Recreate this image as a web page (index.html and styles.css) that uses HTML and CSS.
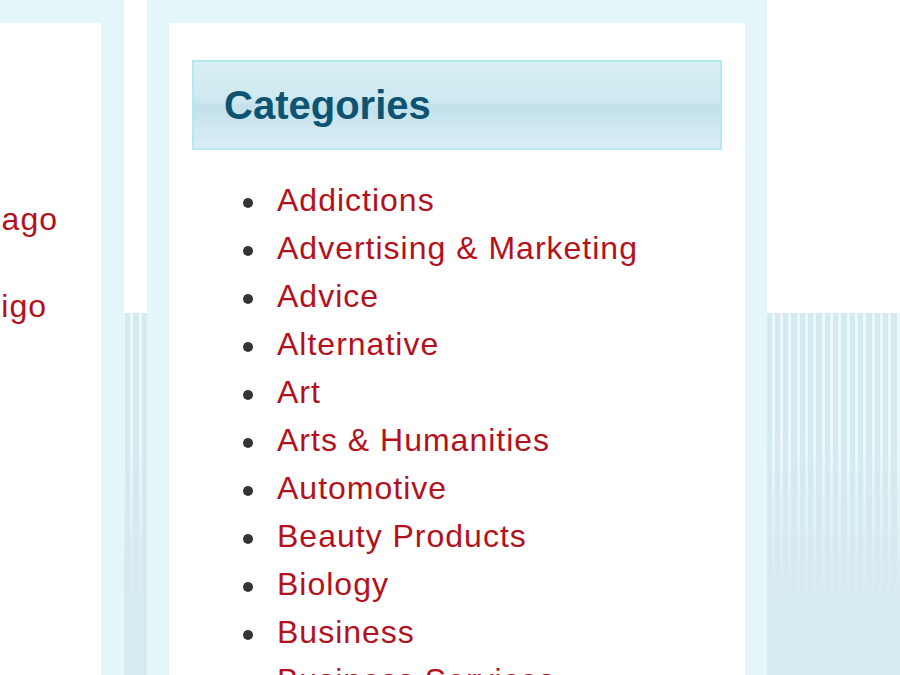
FILE: index.html
```html
<!DOCTYPE html>
<html lang="en">
<head>
    <meta charset="UTF-8">
    <meta name="viewport" content="width=device-width, initial-scale=1.0">
    <title>Directory - Categories</title>
    <link rel="stylesheet" href="styles.css">
</head>
<body>
    <div class="page">
        <!-- Left column (mostly off screen) -->
        <div class="panel panel-left">
            <div class="panel-inner">
                <p class="city"><a href="#">Santiago</a></p>
                <p class="city city-second"><a href="#">Rodrigo</a></p>
            </div>
        </div>

        <!-- Categories column -->
        <div class="panel panel-main">
            <div class="panel-inner">
                <div class="box-title">
                    <h2>Categories</h2>
                </div>
                <ul class="cat-list">
                    <li><a href="#">Addictions</a></li>
                    <li><a href="#">Advertising &amp; Marketing</a></li>
                    <li><a href="#">Advice</a></li>
                    <li><a href="#">Alternative</a></li>
                    <li><a href="#">Art</a></li>
                    <li><a href="#">Arts &amp; Humanities</a></li>
                    <li><a href="#">Automotive</a></li>
                    <li><a href="#">Beauty Products</a></li>
                    <li><a href="#">Biology</a></li>
                    <li><a href="#">Business</a></li>
                    <li><a href="#">Business Services</a></li>
                    <li><a href="#">Careers</a></li>
                </ul>
            </div>
        </div>
    </div>
</body>
</html>
```

FILE: styles.css
```css
/* Page background: white top, striped band below */
html, body {
    margin: 0;
    padding: 0;
    height: 100%;
    overflow: hidden;
}

body {
    font-family: 'Liberation Sans', Arial, sans-serif;
    background-color: #d6ebf1;
    background-image:
        linear-gradient(to bottom, #fff 0, #fff 313px, rgba(214, 235, 241, 0) 313px, rgba(214, 235, 241, 0) 430px, #d6ebf1 600px),
        repeating-linear-gradient(90deg, #d3eaf0 0, #d3eaf0 5.3px, #eef8fb 5.3px, #eef8fb 8.33px);
    background-repeat: no-repeat, repeat;
    background-size: 100% 675px, auto;
}

.page {
    display: flex;
    align-items: flex-start;
    gap: 23px;
}

.panel {
    background-color: #e4f6fa;
    padding: 23px 22px 0 22px;
    min-height: 800px;
    box-sizing: border-box;
    flex-shrink: 0;
}

.panel-inner {
    background-color: #fff;
    min-height: 800px;
}

.panel-left {
    width: 300px;
    margin-left: -176px;
    padding-right: 23px;
}

.panel-left .panel-inner {
    padding-top: 172px;
}

.panel-main {
    width: 620px;
}

.panel-main .panel-inner {
    padding: 37px 23px 0 23px;
}

a {
    color: #b3111b;
    text-decoration: none;
}

/* Left column links */
.city {
    margin: 0;
    text-align: right;
    font-size: 32px;
    letter-spacing: 1px;
    line-height: 48px;
    padding-right: 43px;
}

.city-second {
    margin-top: 39px;
    padding-right: 54px;
}

/* Categories box */
.box-title {
    height: 86px;
    border: 2px solid #b5e8f2;
    background: linear-gradient(to bottom, #d9f0f4 0%, #cde8ef 45%, #c3e1eb 52%, #cce6ef 70%, #d9edf5 100%);
    padding-left: 30px;
}

.box-title h2 {
    margin: 0;
    font-size: 40px;
    font-weight: bold;
    line-height: 86px;
    color: #0d5372;
}

.cat-list {
    margin: 26px 0 0 0;
    padding-left: 85px;
    list-style: none;
    font-size: 32px;
    letter-spacing: 1px;
    line-height: 48px;
}

.cat-list li::before {
    content: "";
    display: inline-block;
    width: 10px;
    height: 10px;
    border-radius: 50%;
    background-color: #333;
    vertical-align: middle;
    margin-left: -34px;
    margin-right: 24px;
}
```
